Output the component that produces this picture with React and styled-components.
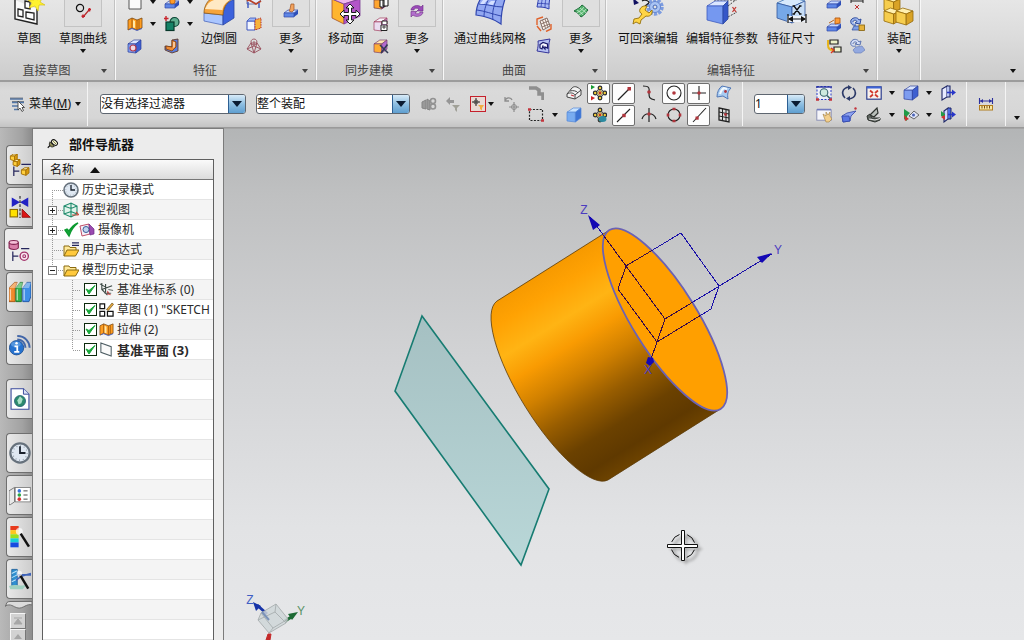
import { useState } from 'react';
import styled, { createGlobalStyle } from 'styled-components';

const GlobalStyle = createGlobalStyle`
  * {
    box-sizing: border-box;
  }

  body {
    margin: 0;
    overflow: hidden;
    font-family: 'Noto Sans', 'Noto Sans CJK SC', sans-serif;
    font-size: 12px;
    line-height: 16px;
    color: #111;
    background: #d6d6d6;
  }

  button, select, input {
    font: inherit;
    color: inherit;
  }
`;

const Page = styled.div`
  display: flex;
  flex-direction: column;
  height: 100vh;
`;

/* ---------- ribbon ---------- */

const Ribbon = styled.header`
  display: flex;
  flex: none;
  overflow: hidden;
  background: linear-gradient(#e6e6e6, #dcdcdc 45%, #cccccc);
  border-bottom: 2px solid #9c9c9c;
`;

const Group = styled.section`
  display: flex;
  flex-direction: column;
  flex: none;
  width: ${({ $width }) => $width}px;
  border-right: 1px solid #f8f8f8;
  box-shadow: inset -1px 0 0 #c2c2c2;
`;

const GroupBody = styled.div`
  display: flex;
  height: 62px;
  padding-left: ${({ $pad }) => $pad || 0}px;
`;

const GroupFooter = styled.div`
  display: flex;
  align-items: center;
  height: 18px;
  color: #444;
`;

const GroupTitle = styled.h2`
  flex: 1;
  margin: 0;
  font-size: 12px;
  font-weight: 400;
  line-height: 16px;
  text-align: center;
`;

const PlainButton = styled.button`
  display: flex;
  align-items: center;
  justify-content: center;
  flex: none;
  padding: 0;
  border: 0;
  background: none;
`;

const GroupMore = styled(PlainButton)`
  width: 22px;
  height: 16px;
`;

const LargeButton = styled(PlainButton)`
  flex-direction: column;
  justify-content: flex-start;
  width: ${({ $width }) => $width}px;
`;

const LargeLabel = styled.span`
  margin-top: 4px;
  line-height: 17px;
  white-space: nowrap;
`;

const GalleryFrame = styled.span`
  display: flex;
  align-items: center;
  justify-content: center;
  width: 38px;
  height: 27px;
  padding-bottom: 5px;
  margin-bottom: -1px;
  border: 1px solid #c3c3c3;
  border-top: 0;
  background: #dfdfdf;
`;

const SmallColumn = styled.div`
  display: grid;
  grid-auto-rows: 22px;
  align-content: end;
  justify-items: center;
  width: ${({ $width }) => $width}px;
  height: 57px;
`;

const RibbonEnd = styled.div`
  display: flex;
  flex: 1;
  align-items: flex-end;
  justify-content: flex-end;
  padding-bottom: 1px;
`;

/* ---------- selection toolbar ---------- */

const Toolbar = styled.div`
  display: flex;
  flex: none;
  height: 46px;
  padding-bottom: 1px;
  background: linear-gradient(#cfcfcf, #dadada 20%, #d6d6d6 80%, #c4c4c4);
  border-bottom: 1px solid #9a9a9a;
`;

const Section = styled.div`
  display: flex;
  align-items: center;
  flex: none;
  padding: 0 ${({ $right }) => $right || 0}px 0 ${({ $left }) => $left || 0}px;
  border-right: 1px solid #f4f4f4;
`;

const ToolbarEnd = styled.div`
  display: flex;
  flex: 1;
  align-items: flex-end;
  justify-content: flex-end;
`;

const MenuButton = styled(PlainButton)`
  gap: 3px;
`;

const SelectBox = styled.label`
  display: grid;
  align-items: center;
  flex: none;
  width: ${({ $width }) => $width}px;
  height: 20px;
  margin-right: ${({ $after }) => $after}px;
`;

const Select = styled.select`
  grid-area: 1 / 1;
  width: 100%;
  height: 20px;
  padding: 0;
  border: 1px solid #5e6670;
  border-radius: 3px;
  background: #fff;
  appearance: none;
  outline: none;
`;

const SelectArrow = styled.span`
  grid-area: 1 / 1;
  justify-self: end;
  display: flex;
  align-items: center;
  justify-content: center;
  width: 17px;
  height: 18px;
  margin-right: 1px;
  border-left: 1px solid #2d5f93;
  border-radius: 0 2px 2px 0;
  background: linear-gradient(#d8ebf8, #8fbfe2 50%, #5f9fd0);
  pointer-events: none;
`;

const ToolCell = styled(PlainButton)`
  width: ${({ $width }) => $width}px;
  height: 22px;
  gap: 1px;
`;

const ToolGrid = styled.div`
  display: grid;
  grid-template-columns: ${({ $columns }) => $columns};
  grid-auto-rows: 22px;
  align-items: center;
  justify-items: center;
`;

const GridButton = styled(PlainButton)`
  width: 23px;
  height: 21px;
  border-radius: 2px;
  ${({ $on }) => $on && 'background: #fdfdfd; border: 1px solid #6e6e6e;'}
`;

/* ---------- resource bar ---------- */

const Workspace = styled.div`
  display: flex;
  flex: 1;
  min-height: 0;
`;

const ResourceBar = styled.nav`
  display: flex;
  flex-direction: column;
  align-items: flex-end;
  flex: none;
  width: 32px;
  padding-top: 17px;
  background: linear-gradient(90deg, #b9b9b9, #a2a2a2 70%, #8c8c8c);
`;

const Tab = styled.button`
  display: flex;
  align-items: center;
  justify-content: center;
  flex: none;
  position: relative;
  width: ${({ $active }) => ($active ? 29 : 26)}px;
  height: ${({ $active }) => ($active ? 43 : 40)}px;
  margin: 0 ${({ $active }) => ($active ? '-1px' : '0')} ${({ $gap }) => $gap}px 0;
  padding: 0;
  border: 1px solid #6f6f6f;
  border-right: 0;
  border-radius: 4px 0 0 4px;
  background: ${({ $active }) => ($active ? '#ececec' : 'linear-gradient(90deg, #e9e9e9, #cdcdcd)')};
`;

const TabEdge = styled.svg`
  flex: none;
  width: 28px;
  height: 12px;
`;

const ScrollButton = styled.button`
  display: flex;
  align-items: center;
  justify-content: center;
  flex: none;
  width: 16px;
  height: 16px;
  margin-right: 6px;
  padding: 0;
  border: 1px solid #f6f6f6;
  border-right-color: #777;
  border-bottom-color: #777;
  background: #d2d2d2;
`;

/* ---------- part navigator ---------- */

const Navigator = styled.aside`
  display: flex;
  flex-direction: column;
  flex: none;
  width: 192px;
  padding: 0 9px;
  border: 1px solid #7b7b7b;
  border-bottom: 0;
  background: #ececec;
`;

const NavigatorTitle = styled.div`
  display: flex;
  align-items: center;
  flex: none;
  gap: 10px;
  height: 30px;
  padding-left: 5px;

  h1 {
    margin: 0;
    font-size: 13px;
    font-weight: 700;
    line-height: 18px;
  }
`;

const TreeBox = styled.div`
  flex: 1;
  min-height: 0;
  overflow: hidden;
  border: 1px solid #5f5f5f;
  border-bottom: 0;
  background: #fff;
`;

const TreeTable = styled.table`
  width: 100%;
  table-layout: fixed;
  border-spacing: 0;

  th {
    height: 20px;
    padding: 0 0 0 7px;
    font-weight: 400;
    text-align: left;
    border-bottom: 1px solid #777;
    background: linear-gradient(#fafafa, #dcdcdc);
  }

  td {
    height: 20px;
    padding: 0;
    border-bottom: 1px solid #e4e4e4;
  }

  tbody tr:nth-child(even) {
    background: #f4f4f4;
  }
`;

const HeaderLabel = styled.span`
  display: flex;
  align-items: center;
  gap: 15px;
`;

const TreeItem = styled.div`
  display: flex;
  align-items: center;
  height: 19px;
  padding-left: 1px;
  overflow: hidden;
  white-space: nowrap;
  color: #2b2b2b;
  font-size: ${({ $bold }) => ($bold ? 13 : 12)}px;
  font-weight: ${({ $bold }) => ($bold ? 700 : 400)};
`;

const Guide = styled.svg`
  flex: none;
  width: ${({ $width }) => $width}px;
  height: 20px;
`;

const Expander = styled.button`
  display: flex;
  flex: none;
  width: 19px;
  height: 20px;
  padding: 0;
  border: 0;
  background: none;
`;

const ItemLabel = styled.label`
  margin-left: 3px;
`;

const CheckWrap = styled.span`
  display: grid;
  flex: none;
  margin: 0 2px;

  svg {
    grid-area: 1 / 1;
    pointer-events: none;
  }
`;

const Check = styled.input`
  grid-area: 1 / 1;
  width: 13px;
  height: 13px;
  margin: 0;
  border: 1px solid #0c2a0c;
  background: #fff;
  appearance: none;
`;

/* ---------- viewport ---------- */

const Viewport = styled.main`
  flex: 1;
  min-width: 0;
  overflow: hidden;
  background: linear-gradient(#b3b5b6, #bfc0c1 13%, #d2d3d5 45%, #e2e3e5 78%, #e6e7e9);
  border-top: 1px solid #a4a4a4;
`;

const Scene = styled.svg`
  display: block;
  width: 100%;
  height: 100%;
`;

const Svg = styled.svg`
  display: block;
  flex: none;
`;

const Icon = ({ name, size = 16 }) => (
  <Svg width={size} height={size} viewBox='0 0 16 16' fill='none'>
    {icons[name]}
  </Svg>
);

const LargeIcon = ({ name }) => (
  <Svg width='32' height='26' viewBox='0 0 32 26' fill='none'>
    {largeIcons[name]}
  </Svg>
);

const Caret = ({ size = 8, color = '#111' }) => (
  <Svg width={size} height={size} viewBox='0 0 8 8'>
    <path d='M1 2H7L4 6Z' fill={color} />
  </Svg>
);

// 작은 정육면체, 여러 아이콘에서 공통으로 사용
const Cube = ({ x = 1, y = 2, s = 13, front = '#7d9cf0', top = '#dbe6ff', side = '#3e5fd0', line = '#2b3f9c' }) => {
  const d = s * 0.3;
  return (
    <g stroke={line} strokeWidth='.7' strokeLinejoin='round'>
      <path d={`M${x} ${y + d}L${x + s * 0.45} ${y}H${x + s}L${x + s * 0.6} ${y + d}Z`} fill={top} />
      <path d={`M${x} ${y + d}H${x + s * 0.6}V${y + s}L${x} ${y + s - 1}Z`} fill={front} />
      <path d={`M${x + s * 0.6} ${y + d}L${x + s} ${y}V${y + s - d}L${x + s * 0.6} ${y + s}Z`} fill={side} />
    </g>
  );
};

const Base = ({ y = 7 }) => (
  <>
    <path d={`M1 ${y + 3}L5 ${y}H15L11 ${y + 3}Z`} fill='#c5d8ff' stroke='#3048a8' strokeWidth='.7' />
    <path d={`M1 ${y + 3}H11V${y + 7}H1Z`} fill='#5e86e6' stroke='#3048a8' strokeWidth='.7' />
    <path d={`M11 ${y + 3}L15 ${y}V${y + 4}L11 ${y + 7}Z`} fill='#2e4fb8' />
  </>
);

const folder = (
  <>
    <path d='M1 14V4H6L7 5.5H13V8' fill='#ffe99a' stroke='#8a6a10' />
    <path d='M1 14L4 8H16L12.5 14Z' fill='#ffc93c' stroke='#8a6a10' />
  </>
);

const clock = (
  <>
    <circle cx='8' cy='8' r='7' fill='#dfe8f2' stroke='#66717c' strokeWidth='1.6' />
    <circle cx='8' cy='8' r='5.2' fill='none' stroke='#7c8894' strokeWidth='.8' strokeDasharray='.6 2.12' />
    <path d='M8 3V8H12' stroke='#18202c' strokeWidth='1.3' />
  </>
);

const snapPoints = (
  <>
    <path d='M9 4.5L5.5 8L9 11.5L12.5 8Z' fill='#f2d75a' />
    <g fill='#f0cf3a' stroke='#2a2a2a' strokeWidth='1.2'>
      <circle cx='9' cy='3' r='1.8' />
      <circle cx='9' cy='13' r='1.8' />
      <circle cx='4.2' cy='8' r='1.8' />
      <circle cx='13.8' cy='8' r='1.8' />
    </g>
    <path d='M6 5L7.5 6.5M12 5L10.5 6.5M6 11L7.5 9.500M12 11L10.5 9.5' stroke='#555' strokeWidth='1.2' />
    <circle cx='9' cy='8' r='1.4' fill='#b33' />
  </>
);

const icons = {
  curves: (
    <>
      <circle cx='5' cy='5' r='3.6' stroke='#111' strokeWidth='1.2' />
      <path d='M8.500 13.500L14 7' stroke='#b52a2a' strokeWidth='1.2' />
      <path d='M8 11.500V15M6.500 13.200H10M13 6.500H16M14.500 5V8.500' stroke='#c4202a' strokeWidth='1.5' />
    </>
  ),
  plane: <path d='M2 1H11L14 4V15H2Z' fill='#fbfbfb' stroke='#555' />,
  extrude: (
    <>
      <path d='M1 4L5 2L10 4L15 2V12L10 14L5 12L1 14Z' fill='#ff9d21' stroke='#7c4a12' strokeWidth='.8' />
      <path d='M5 2V12M10 4V14M12 3.5V13' stroke='#8c4d08' strokeWidth='.8' />
      <path d='M6 4L8 5V12L6 11.5Z' fill='#ffe9a8' />
      <path d='M2 13.5L5 12.5L10 14.5L15 12.5' stroke='#4a61c2' strokeWidth='.9' />
    </>
  ),
  hole: (
    <>
      <Cube />
      <circle cx='6' cy='10' r='3' fill='#f1d9e4' stroke='#b23a4c' strokeWidth='1.2' />
    </>
  ),
  pad: (
    <>
      <Base />
      <path d='M6 3L9 2L11 3V9L8 10L6 9Z' fill='#ff9c2a' stroke='#a2520b' strokeWidth='.7' />
    </>
  ),
  unite: (
    <>
      <circle cx='10.5' cy='6' r='4.5' fill='#5fae90' stroke='#0b4635' strokeWidth='1.2' />
      <rect x='2' y='6' width='8' height='8.5' fill='#138266' stroke='#07372a' strokeWidth='1.2' />
      <path d='M2 0V5M0 2.5H4.5' stroke='#c8242c' strokeWidth='1.4' />
    </>
  ),
  shell: (
    <>
      <path d='M8 2L14 1V13L8 15L1 12V8L8 9Z' fill='#5b7ddb' stroke='#5b3018' strokeWidth='.8' />
      <path d='M8 2L12 4V9L8 13L2 11V8L8 9Z' fill='#ee8b33' stroke='#7a3d14' strokeWidth='.8' />
      <path d='M9 4H11V9L9 10Z' fill='#f7c69a' />
    </>
  ),
  trim: (
    <>
      <path d='M1 4H10L15 1V6L10 10H1Z' fill='#e9edf8' stroke='#4e5f9d' strokeWidth='.8' />
      <path d='M1 7L3 6L10 10L15 7' stroke='#b8432a' strokeWidth='1.8' />
      <path d='M2 8V14M13 9V14' stroke='#3a55c0' strokeWidth='1.4' />
    </>
  ),
  offset: (
    <>
      <path d='M1 5H9V14H1Z' fill='#f2f5ff' stroke='#3a55c0' />
      <path d='M1 5L4 2H10L9 5Z' fill='#9fb8f6' stroke='#3a55c0' strokeWidth='.8' />
      <path d='M9 4L15 2V12L9 14Z' fill='#f6b23c' stroke='#b52f2f' strokeDasharray='1.5 1' />
    </>
  ),
  draft: (
    <path d='M1 11L5 5H11L15 11L8 15ZM5 5L8 15L11 5M1 11L8 8L15 11M8 1A3 3 0 1 1 7.9 1M8 3V8' stroke='#974d5a' strokeWidth='.9' />
  ),
  more: (
    <>
      <Base />
      <path d='M8 1H11V7L9 9L6 8L7 6Z' fill='#f2a35e' stroke='#9d5322' strokeWidth='.7' />
    </>
  ),
  copyFace: (
    <>
      <Cube front='#ffa52e' top='#ffe0a0' side='#a54ec8' line='#6e3c4e' />
      <path d='M7 6H11V13H7ZM10 4H15V12H10Z' fill='#fff' stroke='#111' />
    </>
  ),
  resizeFace: (
    <>
      <Cube front='#eadcf0' top='#f7f1fa' side='#c78ad6' line='#a13a5c' />
      <path d='M8 9H14V14.5H8ZM9 8V5H14V8' fill='#fff' stroke='#222' />
      <path d='M9 11H13M11 9.5V13' stroke='#222' strokeWidth='.8' />
    </>
  ),
  deleteFace: (
    <>
      <Cube front='#ffad35' top='#ffe5b0' side='#b269cf' line='#7c3f6a' />
      <path d='M7 7L15 15M14.5 6.5L8 15' stroke='#333a55' strokeWidth='1.6' />
    </>
  ),
  replace: (
    <>
      <path d='M2 7C2 3 9 1 12 4L14 2V8H8L10 6C8 4.5 5 5 5 7Z' fill='#9b4bb9' stroke='#6d2b86' strokeWidth='.6' />
      <path d='M14 9C14 13 7 15 4 12L2 14V8.5H8L6 10C8 11.5 11 11 11 9Z' fill='#b370cc' stroke='#6d2b86' strokeWidth='.6' />
    </>
  ),
  mesh: (
    <>
      <path d='M3 2C7 1 11 2 15 1C13 6 13 10 13 15C9 13 5 13 1 13C2 9 2 6 3 2Z' fill='#a9baf5' stroke='#2e3fae' />
      <path d='M7 1.5C6 6 5.5 9 5 13M11 1.5C9.5 6 9 9 9 14M2.5 5.5C7 5 10 6 14 5M2 9.5C6 9 9 10 13 10' stroke='#2e3fae' strokeWidth='.8' />
    </>
  ),
  sweep: (
    <>
      <path d='M4 5L11 2L14 10L7 14Z' fill='#f8efe9' stroke='#6d5148' strokeWidth='.8' />
      <path d='M6.5 4L9.5 12M9 3L12 11M5 8L12.5 5M6 11L13.5 8' stroke='#6d5148' strokeWidth='.7' />
      <path d='M1 9V3L7 1M1 10L5 15M15 8V13L10 15.5' stroke='#e0622b' strokeWidth='1.4' />
    </>
  ),
  nSided: (
    <>
      <path d='M2 3L14 1C12.5 6 12.5 10 13 15L1 13C2 10 2.5 6 2 3Z' fill='#b7c1f2' stroke='#34349a' />
      <path d='M4 10V6.5L7 4.500L11.5 6V10L9 9V11L7 9V7.500L6 11Z' fill='#f7f7ff' stroke='#1b1b6a' strokeWidth='1.2' />
    </>
  ),
  green: (
    <>
      <path d='M1 8C4 6 7 5 9 2C11 3 13 6 15 7C13 9 12 12 8 14C6 11 4 9 1 8Z' fill='#52b26c' stroke='#1b6a38' />
      <path d='M4 7C7 9 9 10 10 12M7 5C9 7 12 8 13 10M3.5 10C7 8 9 7 11 4M6 12C9 10 11 9 13 6' stroke='#d8f4dc' strokeWidth='.7' />
    </>
  ),
  rollback: (
    <>
      <Base y={7} />
      <path d='M3 6C5 1 11 1 12 6' stroke='#c03030' strokeWidth='1.6' />
    </>
  ),
  replaceFeature: (
    <>
      <Base y={8} />
      <path d='M9 2H14V7L9 8ZM3 7L8 4' fill='#ff9d35' stroke='#b35a12' strokeWidth='.9' />
    </>
  ),
  reorder: (
    <>
      <path d='M4 2H12V6H4ZM8 9H15V14H8Z' fill='#eef3c9' stroke='#222' strokeWidth='1.2' />
      <path d='M2 2V7C2 11 4 12 7 12' stroke='#e8b51c' strokeWidth='2' />
      <path d='M5 10L8 12L5 15' stroke='#d8371e' strokeWidth='1.4' />
    </>
  ),
  dims: (
    <>
      <path d='M2 1V9M14 1V9M2 7H14' stroke='#222' />
      <path d='M6 11L10 15M10 11L6 15' stroke='#c03030' />
    </>
  ),
  suppress: (
    <>
      <path d='M7 9C3 10 1 7 2 4C4 1 9 1 10 4L12 3L11 8L6 7L8 5.5C7 3.5 4 4 4 6' fill='#9db6ee' stroke='#2c4a9d' />
      <path d='M5 10H11V14H3Z' fill='#7f9fe6' stroke='#2c4a9d' strokeWidth='.7' />
      <rect x='10' y='9' width='5.5' height='5.5' fill='#e5b23a' stroke='#84600b' strokeWidth='.8' />
    </>
  ),
  unsuppress: (
    <>
      <path d='M7 8C3 9 1 7 2 4C4 0 9 1 10 4L12 3L11 7L6 6L8 5C7 3 4 4 4 6' fill='#d4def7' stroke='#5a73b0' />
      <path d='M4 12L7 9L13 8L16 12L12 15H6Z' fill='#93a9e0' stroke='#6d83bb' strokeWidth='.7' />
    </>
  ),
  menu: (
    <>
      <path d='M0 3H13M2 6.5H14M2 10H8M4 13.5H9' stroke='#5377a8' strokeWidth='1.5' />
      <path d='M0 2H13M2 5.5H14' stroke='#3f4b5c' strokeWidth='.6' />
      <path d='M8 5V14L10 12L12 15.5L13.5 14.5L12 11.5H14.5Z' fill='#fff' stroke='#444' strokeWidth='.9' />
    </>
  ),
  grayPart: (
    <>
      <path d='M1 6L5 4V13L1 12ZM6 3L9 5V14L6 13Z' fill='#999' stroke='#858585' />
      <circle cx='12' cy='5' r='2.5' stroke='#929292' strokeWidth='1.6' />
      <circle cx='12' cy='10.5' r='2.5' stroke='#929292' strokeWidth='1.6' />
    </>
  ),
  grayFilter: (
    <>
      <path d='M1 5L5 1V4H9V7H5V9Z' fill='#969696' />
      <path d='M7 9H15L12 12V16L10 14V12Z' fill='#a0a097' />
    </>
  ),
  snapBox: (
    <>
      <rect x='.5' y='.5' width='15' height='15' fill='#e8d9d4' stroke='#c5202c' />
      <path d='M6 2V10M2 6H10' stroke='#222' />
      <circle cx='6' cy='6' r='2' stroke='#444' strokeWidth='.8' />
      <path d='M8 9H14L12 12V14.5L10 13V11Z' fill='#f2ab3f' />
    </>
  ),
  grayRotate: (
    <>
      <path d='M2 5C3 1 8 1 9 4M2 1V5H6' stroke='#8d8d8d' strokeWidth='1.3' />
      <path d='M11 6V16M6 11H16' stroke='#8d8d8d' strokeWidth='1.2' />
      <circle cx='11' cy='11' r='2.5' stroke='#8d8d8d' />
    </>
  ),
  grayLine: <path d='M1 3H8L11 5V9H15V15' stroke='#8f8f8f' strokeWidth='3.5' />,
  lasso: (
    <>
      <rect x='1.5' y='2.5' width='13' height='11' stroke='#222' strokeWidth='1.2' strokeDasharray='2 1.4' />
      <path d='M0 2.5H3M13 13.5H16' stroke='#c3343c' strokeWidth='2.4' />
    </>
  ),
  wireBlock: (
    <>
      <path d='M1 9L6 3C8 1 11 1 15 5V10L9 14L1 12Z' fill='#f2f2f2' stroke='#444' />
      <path d='M1 9C4 7 8 8 9 10L15 5M9 10V14M4 6C7 5 11 6 12 8' stroke='#444' />
      <path d='M5 10L8 11' stroke='#c3343c' strokeWidth='1.2' />
    </>
  ),
  snapAll: (
    <>
      {snapPoints}
      <path d='M0 0L4 2L0 4.5Z' fill='#159b32' />
      <path d='M0 11L4 13L0 15.5Z' fill='#d02323' />
    </>
  ),
  endPoint: (
    <>
      <path d='M2 15L13 4' stroke='#222' strokeWidth='1.2' />
      <rect x='11.5' y='2' width='3.5' height='3.5' fill='#b0353c' />
    </>
  ),
  sCurve: (
    <>
      <path d='M2 1C10 1 8 5 8 8C8 12 8 14 14 15' stroke='#222' strokeWidth='1.2' />
      <circle cx='8' cy='7' r='1.8' fill='#b0353c' />
    </>
  ),
  center: (
    <>
      <circle cx='8' cy='8' r='7' stroke='#222' strokeWidth='1.1' />
      <circle cx='8' cy='8' r='1.8' fill='#b0353c' />
    </>
  ),
  cross: (
    <>
      <path d='M8 1V15M1 8H15' stroke='#222' strokeWidth='1.1' />
      <circle cx='8' cy='8' r='1.7' fill='#b0353c' />
    </>
  ),
  surface: (
    <>
      <path d='M1 12C1 7 3 3 6 1L15 3C12 6 11 9 12 14L7 11Z' fill='#a9ccf2' stroke='#5177b5' />
      <path d='M4 9C5 6 6 4 8 3L11 4' stroke='#f3faff' strokeWidth='2' />
      <circle cx='9.5' cy='6.5' r='1.4' fill='#b0353c' />
    </>
  ),
  solid: <Cube x={1} y={1} s={14} front='#79acf0' top='#c9e4ff' side='#3d74d4' line='#5488d8' />,
  snapGlobe: (
    <>
      {snapPoints}
      <ellipse cx='11.5' cy='12' rx='4' ry='3' fill='#2c8aa0' />
    </>
  ),
  midPoint: (
    <>
      <path d='M1 15L14 2' stroke='#222' strokeWidth='1.1' />
      <rect x='6.3' y='6.8' width='3.4' height='3.4' fill='#b0353c' />
    </>
  ),
  intersect: (
    <>
      <path d='M1 12C3 5 13 5 15 12M8 1V15' stroke='#222' strokeWidth='1.2' />
      <circle cx='8' cy='7' r='1.7' fill='#b0353c' />
    </>
  ),
  quadrant: (
    <>
      <circle cx='8' cy='8' r='6' stroke='#222' strokeWidth='1.1' />
      <path d='M6.5 2H9.5M6.5 14H9.5M2 6.5V9.5M14 6.5V9.5' stroke='#b0353c' strokeWidth='2.6' />
    </>
  ),
  onCurve: (
    <>
      <path d='M2 15L15 1' stroke='#222' strokeWidth='1.1' />
      <rect x='4.5' y='9.5' width='3.2' height='3.2' fill='#b0353c' />
    </>
  ),
  grid: (
    <>
      <path d='M3 1L13 3V15L3 13Z' fill='#ddd' stroke='#222' strokeWidth='1.3' />
      <path d='M6.5 2V14M10 2.5V14.5M3 5L13 7M3 9L13 11' stroke='#222' />
      <circle cx='9.5' cy='7.5' r='1.4' fill='#b0353c' />
    </>
  ),
  fit: (
    <>
      <rect x='1' y='1.5' width='14' height='13' fill='#eef0f8' stroke='#2d3dc8' strokeDasharray='2 1.5' />
      <path d='M0 2H16' stroke='#26309c' strokeWidth='1.4' />
      <path d='M0 14.5H3M13 14.5H16' stroke='#c3343c' strokeWidth='2.4' />
      <circle cx='8' cy='7.5' r='3.8' fill='#cfeadf' stroke='#39656b' strokeWidth='1.1' />
      <path d='M11 10.5L14 13.5' stroke='#39656b' strokeWidth='1.6' />
    </>
  ),
  rotate: (
    <>
      <path d='M4 13C0 9 1 3 8 2M12 3C16 7 15 13 8 14' stroke='#2c3a68' strokeWidth='1.7' />
      <path d='M7 0L11 2.5L7 5ZM9 16L5 13.5L9 11Z' fill='#2c3a68' />
    </>
  ),
  layout: (
    <>
      <rect x='.8' y='1.8' width='14.4' height='12.4' fill='#f8f2ee' stroke='#2d3f8f' strokeWidth='1.2' />
      <path d='M1 2.5H15' stroke='#3d63d6' strokeWidth='2' />
      <path d='M4 5.5L7 8M4 12L7 9.5M12 5.5L9 8M12 12L9 9.5' stroke='#d0382c' strokeWidth='1.8' />
    </>
  ),
  shaded: <Cube x={1} y={1} s={14} />,
  open: (
    <>
      <path d='M2 4L7 1V12L2 15Z' fill='#e9ecff' stroke='#1e2766' strokeWidth='1.1' />
      <path d='M7 1H10V12H7' fill='#b8c4f0' stroke='#1e2766' strokeWidth='1.1' />
      <path d='M7 7.5H13' stroke='#2836c8' strokeWidth='1.6' />
      <path d='M12 4.5L16 7.5L12 10.5Z' fill='#2836c8' />
    </>
  ),
  snapshot: (
    <>
      <rect x='.8' y='2.8' width='14.4' height='10.4' fill='#f5f5fa' stroke='#8b91b5' />
      <path d='M1 2.5H15' stroke='#6f7ac0' strokeWidth='1.5' />
      <path d='M8 10L7 7L10 9L10 5L12 8L14 5V9L16 12L13 15H10Z' fill='#f3cf8c' stroke='#9d7b3c' strokeWidth='.6' />
    </>
  ),
  paint: (
    <>
      <path d='M1 9L6 6L15 4L10 9L9 14L2 15Z' fill='#8ea3f0' stroke='#3146a8' strokeWidth='.8' />
      <path d='M1 9H8L9 14L2 15Z' fill='#5a76e2' stroke='#3146a8' strokeWidth='.8' />
      <circle cx='14.5' cy='1.5' r='1.2' fill='#c3343c' />
    </>
  ),
  section: (
    <>
      <path d='M4 8L11 1L12 6L8 10Z' fill='#b9bfba' stroke='#2d322e' strokeWidth='1.2' />
      <path d='M1 9L4 7L6 11H14V13L9 15L2 13Z' fill='#5e645f' stroke='#2d322e' />
      <path d='M3 12L9 13L14 11.5' stroke='#e6e6e6' />
    </>
  ),
  clip: (
    <>
      <path d='M1 2L7 6L4 9V14L1 12Z' fill='#219b47' />
      <path d='M1 8L6 12L2 14Z' fill='#d03131' />
      <path d='M6 9L11 4L16 8L11 12Z' fill='#dfe4f6' stroke='#666' />
      <circle cx='10.5' cy='8' r='1.5' fill='#4d65b8' />
    </>
  ),
  openCut: (
    <>
      <path d='M4 4L8 1V12L4 15Z' fill='#cfd5ff' stroke='#1e2766' strokeWidth='1.1' />
      <path d='M8 1H11V12H8' fill='#4d6be0' stroke='#1e2766' />
      <path d='M1 4L5 7V11L1 9Z' fill='#219b47' />
      <path d='M1 10L5 8V13Z' fill='#d03131' />
      <path d='M8 7.5H13' stroke='#2836c8' strokeWidth='1.6' />
      <path d='M12 4.5L16 7.5L12 10.5Z' fill='#2836c8' />
    </>
  ),
  measure: (
    <>
      <path d='M1.5 2V8M14.5 2V8M2 5H14' stroke='#2b2f9e' strokeWidth='1.1' />
      <path d='M2 5L5 3V7ZM14 5L11 3V7Z' fill='#2b2f9e' />
      <rect x='1.5' y='9.5' width='13' height='4.5' fill='#f8e9a2' stroke='#b07c1e' />
      <path d='M4 10V12.5M6.5 10V12.5M9 10V12.5M11.5 10V12.5' stroke='#7a4c12' />
    </>
  ),
  assemblyTab: (
    <>
      <Cube x={1} y={0} s={5} front='#ffcf3d' top='#ffefb0' side='#d99a0c' line='#a87407' />
      <Cube x={3} y={4} s={5} front='#ffcf3d' top='#ffefb0' side='#d99a0c' line='#a87407' />
      <Cube x={9} y={10} s={5.5} front='#ffcf3d' top='#ffefb0' side='#d99a0c' line='#a87407' />
      <path d='M3.5 9V16M3.5 12.5H7.5M9 7.5H16' stroke='#26265c' strokeWidth='.9' />
    </>
  ),
  constraintTab: (
    <>
      <path d='M2 1V8L8 4.5ZM14 1V8L8 4.5Z' fill='#2222c4' />
      <path d='M8 0V16' stroke='#222' strokeWidth='.8' strokeDasharray='2 1' />
      <rect x='.8' y='9.8' width='5.4' height='5.4' fill='#ffe100' stroke='#8a6a00' strokeWidth='.8' />
      <path d='M9.5 9.5V15.5H15.5Z' fill='#dc1414' stroke='#8a1010' strokeWidth='.6' />
    </>
  ),
  partTab: (
    <>
      <path d='M.8 2.5V6.5C2 8 6.5 8 7.5 6.5V2.5' fill='#d97fa8' stroke='#81234f' strokeWidth='.8' />
      <ellipse cx='4.15' cy='2.5' rx='3.35' ry='1.4' fill='#f5c1d8' stroke='#81234f' strokeWidth='.8' />
      <path d='M9.5 7H15.5M3.5 9V16M3.5 12.5H7.5' stroke='#26265c' strokeWidth='.9' />
      <circle cx='11.8' cy='12.5' r='3' fill='#f8e6ef' stroke='#a3336b' />
      <circle cx='11.8' cy='12.5' r='1' stroke='#a3336b' strokeWidth='.8' />
    </>
  ),
  libraryTab: (
    <>
      <path d='M0 5L4 1H6L4.5 5V15H0Z' fill='#f08a2c' stroke='#a04f10' strokeWidth='.6' />
      <path d='M5 5L8 1H10L9 5V15H5Z' fill='#34b24a' stroke='#146b26' strokeWidth='.6' />
      <path d='M10 5L13 1H16V11L14.5 15H10Z' fill='#3f8fe6' stroke='#1a4fa0' strokeWidth='.6' />
      <path d='M0 5L4 1H16L14.5 5Z' fill='#fff' fillOpacity='.35' />
      <path d='M1 6V14M6 6V14M11 6V14' stroke='#fff' strokeOpacity='.6' />
    </>
  ),
  infoTab: (
    <>
      <path d='M6 4C10 4 12 7 12 10M6 1.5C12 1.5 15 6 15 10' stroke='#4266a8' strokeWidth='1.4' />
      <circle cx='5.5' cy='10' r='5.2' fill='#2672cf' stroke='#164a92' strokeWidth='.6' />
      <ellipse cx='5' cy='7.5' rx='3.5' ry='2' fill='#7db8f0' fillOpacity='.5' />
      <path d='M4 9H6V13M3.8 13H7.5' stroke='#fff' strokeWidth='1.3' />
      <circle cx='5.5' cy='6.8' r='.9' fill='#fff' />
    </>
  ),
  webTab: (
    <>
      <path d='M1.5 .5H10.5L14.5 4.5V15.5H1.5Z' fill='#fff' stroke='#3a4a9c' strokeWidth='.8' />
      <path d='M10.5 .5V4.5H14.5' fill='#dce2f6' stroke='#3a4a9c' strokeWidth='.7' />
      <circle cx='8' cy='9.5' r='4' fill='#2d8a6c' stroke='#1f5d73' strokeWidth='.6' />
      <path d='M8 6L10 8L9 11L7 12L6 9Z' fill='#a9dfc6' />
    </>
  ),
  clock,
  palettesTab: (
    <>
      <path d='M0 5L4 2.5V13L1 15H0Z' fill='#e9e9e9' stroke='#666' strokeWidth='.6' />
      <rect x='4.5' y='2.5' width='11' height='10.5' fill='#fff' stroke='#777' strokeWidth='.6' />
      <circle cx='7.5' cy='5' r='1.3' fill='#3a74d8' />
      <circle cx='7.5' cy='8' r='1.3' fill='#2ba545' />
      <circle cx='7.5' cy='11' r='1.3' fill='#d83030' />
      <path d='M10.5 5H13.5M10.5 8H13.5M10.5 11H13.5' stroke='#444' strokeWidth='.7' />
    </>
  ),
  colorTab: (
    <>
      <path d='M1 0H7V3H1Z' fill='#e83a1c' />
      <path d='M1 3H7V6H1Z' fill='#ffc61c' />
      <path d='M1 6H7V9H1Z' fill='#9be01c' />
      <path d='M1 9H7V12H1Z' fill='#17cfd8' />
      <path d='M1 12H7V15.5H1Z' fill='#174be0' />
      <circle cx='7.5' cy='4' r='2.5' fill='#fff' fillOpacity='.7' />
      <path d='M8.5 5.5L14.5 15' stroke='#111' strokeWidth='1.8' />
    </>
  ),
  studioTab: (
    <>
      <path d='M2 1H6V13H2Z' fill='#2f8fd0' stroke='#1d5f98' strokeWidth='.6' />
      <path d='M2 4L6 2M2 7L6 5M2 10L6 8' stroke='#bde3f8' strokeWidth='.8' />
      <path d='M0 13C5 11 9 14 13 12L10 15.5H1Z' fill='#9fd0c0' />
      <path d='M5 9L9 6L16 4M6 5H16' stroke='#3f63b8' strokeWidth='1.1' />
      <path d='M8 5L14 15' stroke='#111' strokeWidth='1.8' />
      <circle cx='7.5' cy='4' r='2' fill='#fff' fillOpacity='.7' />
    </>
  ),
  modelView: (
    <>
      <path d='M1 4L8 1L14 4V12L8 15L1 12ZM1 4L8 6.5L14 4M8 1V15M1 12L8 9.5L14 12' fill='#dff3ea' stroke='#1f8a6c' strokeWidth='1.1' />
      <path d='M9 13H15M13 10L16 13' stroke='#d04a3c' strokeWidth='1.2' />
    </>
  ),
  tick: <path d='M2 8L6 14C8 8 11 4 15 1C10 3 8 6 6 9L4 7Z' fill='#16a53a' stroke='#0c9a30' strokeWidth='1.4' />,
  camera: (
    <>
      <path d='M1 4L10 2L11 12L3 14Z' fill='#f5eef6' stroke='#c0506a' />
      <path d='M10 2L15 7V12L11 13Z' fill='#9a4ab0' stroke='#6d2b86' strokeWidth='.7' />
      <circle cx='7' cy='7.5' r='3' fill='#bfd3ee' stroke='#3b5d98' />
    </>
  ),
  expressions: (
    <>
      {folder}
      <path d='M9 .8H16M9 3.3H16' stroke='#26265c' strokeWidth='1.2' />
    </>
  ),
  folder,
  csys: (
    <>
      <path d='M3 1V8L9 14M3 8L14 4M1 2L8 6M7 2V11' stroke='#3e4a46' strokeWidth='1.2' />
      <path d='M9 9L13 14L8 13Z' fill='#d85050' />
      <path d='M6 12H13M10 8L15 9' stroke='#55605c' />
    </>
  ),
  sketch: (
    <>
      <path d='M1 2H6V7H1ZM1 10H6V15H1ZM9 10H15V15H9Z' fill='#fff' stroke='#111' strokeWidth='1.3' />
      <path d='M8 8L14 1L15.5 2.5L10 9Z' fill='#e8a93c' stroke='#5c4310' strokeWidth='.7' />
    </>
  ),
  datumPlane: <path d='M2 1L13 5V15L2 11Z' fill='#fafafa' stroke='#4c5c62' strokeWidth='1.1' />,
  pin: (
    <>
      <path d='M1 13L5 9' stroke='#111' strokeWidth='1.5' />
      <path d='M4 5L10 11L7 12C5 12 3 10 3 8Z' fill='#8f8c54' stroke='#111' />
      <ellipse cx='10' cy='6' rx='4.5' ry='3' transform='rotate(40 10 6)' fill='#f4f3d4' stroke='#111' strokeWidth='1.3' />
      <path d='M8 4L12 8' stroke='#807c3a' strokeWidth='1.2' />
    </>
  ),
};

const Box3D = ({ x, y, w, h }) => (
  <g stroke='#94690a' strokeWidth='.8' strokeLinejoin='round'>
    <path d={`M${x} ${y}L${x + w * 0.4} ${y - 3}L${x + w} ${y}L${x + w * 0.6} ${y + 3}Z`} fill='#fff0b0' />
    <path d={`M${x} ${y}L${x + w * 0.6} ${y + 3}V${y + h}L${x} ${y + h - 3}Z`} fill='#f6cd4e' />
    <path d={`M${x + w * 0.6} ${y + 3}L${x + w} ${y}V${y + h - 4}L${x + w * 0.6} ${y + h}Z`} fill='#d9a326' />
  </g>
);

const largeIcons = {
  sketch: (
    <>
      <path d='M2 0V19L24 24V9' fill='#fafafa' stroke='#222' strokeWidth='1.4' />
      <path d='M5 9L10 10V17L5 16ZM12 1L17 2V9L12 8ZM13 12L21 13V20L13 18Z' fill='#fff' stroke='#222' strokeWidth='1.3' />
      <path d='M23 -6L24.5 0L30 -3L27 2L32 5L26 5L25 11L22 6L16 8L19 3L15 0L21 0Z' fill='#fff22e' stroke='#d8c21a' strokeWidth='.7' />
    </>
  ),
  blend: (
    <>
      <path d='M1 13L20 15V25L1 21Z' fill='#aac6ff' stroke='#4c68bd' strokeWidth='.8' />
      <path d='M20 15C21 6 25 1 31 0V18L20 25Z' fill='#3c62dc' stroke='#2b469f' strokeWidth='.8' />
      <path d='M1 13C1 6 5 0 9 -2H31C25 1 20 6 20 15Z' fill='#f6a43c' stroke='#8b5a18' strokeWidth='.8' />
      <path d='M2 9C4 4 7 1 11 0H27C22 3 20 6 19.5 10Z' fill='#ffe9c4' />
    </>
  ),
  moveFace: (
    <>
      <path d='M2 -1L14 4V24L2 18Z' fill='#ffb52f' stroke='#a3502c' strokeWidth='.8' />
      <path d='M2 -1L14 4L30 -1Z' fill='#f0b8ee' stroke='#7b3d94' strokeWidth='.8' />
      <path d='M14 4L30 -1V16L14 24Z' fill='#b355c8' stroke='#7b3d94' strokeWidth='.8' />
      <path d='M20 4L24 8H21.5V12.5H26V10L30 14L26 18V15.5H21.5V20H24L20 24L16 20H18.5V15.5H14V18L10 14L14 10V12.5H18.5V8H16Z' fill='#fff' stroke='#1c1c1c' />
    </>
  ),
  throughMesh: (
    <>
      <path d='M7 -2L31 -1C28 8 27 16 27 24C20 19 10 16 2 15C2 9 4 3 7 -2Z' fill='#92a8f2' stroke='#3046ae' strokeWidth='1.2' />
      <path d='M15 -2C11 6 10 12 10 17M23 -2C19 7 18 14 19 20M5 4C14 4 20 7 29 7M3 10C11 11 18 14 27 16' stroke='#3046ae' />
      <path d='M9 0L14 0C11 2 11 3 10.5 4L6 4ZM17 1L21 1C20 3 19 5 18.5 5L14 4Z' fill='#d5e0ff' />
    </>
  ),
  rollbackEdit: (
    <>
      <circle cx='23' cy='7' r='7' stroke='#7c9ce0' strokeWidth='3.5' strokeDasharray='3.2 1.2' />
      <circle cx='23' cy='7' r='5.5' fill='#a9c4f4' stroke='#6485cf' />
      <circle cx='23' cy='7' r='2' fill='#e2e2e2' stroke='#4468b8' />
      <path d='M1 -2L7 3L2 5Z' fill='#101060' />
      <path d='M10 1C13 -1 17 1 17 3M17 3L13 6' stroke='#222' strokeWidth='1.3' />
      <path d='M8 9C10 5 15 6 15 6L13 10L17 13L20 10C21 15 17 17 14 16L9 20L8 24L4 22L1 24L2 19L7 18L10 14C8 13 7 11 8 9Z' fill='#ffd545' stroke='#95700b' strokeWidth='.9' />
    </>
  ),
  editParams: (
    <>
      <path d='M8 0H31M22 17L31 12M22 6L31 -1' stroke='#444' strokeDasharray='2 1.2' />
      <path d='M1 6L9 1H22L17 6Z' fill='#dbe6ff' stroke='#3e5cc0' strokeWidth='.8' />
      <path d='M1 6H17V24L1 20Z' fill='#7598f0' stroke='#3e5cc0' strokeWidth='.8' />
      <path d='M17 6L22 1V19L17 24Z' fill='#3657c8' stroke='#2b469f' strokeWidth='.8' />
      <path d='M26.5 7L30 12M30 7L26.5 12' stroke='#c33a34' strokeWidth='1.3' />
    </>
  ),
  featureDims: (
    <>
      <path d='M2 3L15 -3L30 1L17 7Z' fill='#d6e9fc' stroke='#3e76b8' strokeWidth='.8' />
      <path d='M2 3L17 7V23L2 18Z' fill='#76a8e8' stroke='#34569c' strokeWidth='.8' />
      <path d='M17 7L30 1V16L17 23Z' fill='#c7ddf5' stroke='#34569c' strokeWidth='.8' />
      <path d='M19 6L25 14M25 6L19 14M17.5 6H20M24 6H26.5M17.5 14H20M24 14H26.5' stroke='#111' strokeWidth='1.3' />
      <path d='M12 16H32V22H12Z' fill='#eef2f8' />
      <path d='M13 14V23M31 14V23M14 19H30' stroke='#111' strokeWidth='1.2' />
      <path d='M13 19L18 16V22ZM31 19L26 16V22Z' fill='#111' />
    </>
  ),
  assembly: (
    <>
      <Box3D x={1} y={-1} w={16} h={14} />
      <Box3D x={1} y={11} w={16} h={13} />
      <Box3D x={13} y={11} w={17} h={14} />
    </>
  ),
};

const Large = ({ icon, gallery, label, width, caret }) => (
  <LargeButton type='button' $width={width}>
    {gallery ? (
      <GalleryFrame>
        <Icon name={gallery} />
      </GalleryFrame>
    ) : (
      <LargeIcon name={icon} />
    )}
    <LargeLabel>{label}</LargeLabel>
    {caret && <Caret />}
  </LargeButton>
);

const Small = ({ items, width }) => (
  <SmallColumn $width={width}>
    {items.map((name) => (
      <PlainButton key={name} type='button' aria-label={name}>
        <Icon name={name} />
      </PlainButton>
    ))}
  </SmallColumn>
);

const SmallCarets = ({ width }) => (
  <SmallColumn $width={width}>
    <PlainButton type='button' aria-label='展开'><Caret /></PlainButton>
    <PlainButton type='button' aria-label='展开'><Caret /></PlainButton>
    <span />
  </SmallColumn>
);

const RibbonGroup = ({ title, width, pad, children }) => (
  <Group $width={width}>
    <GroupBody $pad={pad}>{children}</GroupBody>
    {title && (
      <GroupFooter>
        <GroupTitle>{title}</GroupTitle>
        <GroupMore type='button' aria-label={`${title}选项`}>
          <Caret color='#444' />
        </GroupMore>
      </GroupFooter>
    )}
  </Group>
);

const Dropdown = ({ label, width, after, options }) => (
  <SelectBox $width={width} $after={after}>
    <Select aria-label={label}>
      {options.map((option) => (
        <option key={option}>{option}</option>
      ))}
    </Select>
    <SelectArrow>
      <Svg width='12' height='8' viewBox='0 0 12 8'>
        <path d='M1 1H11L6 7Z' fill='#0b1c33' />
      </Svg>
    </SelectArrow>
  </SelectBox>
);

const snapTools = [
  ['wireBlock'], ['snapAll', true], ['endPoint', true], ['sCurve'], ['center', true], ['cross', true], ['surface'],
  ['solid'], ['snapGlobe'], ['midPoint', true], ['intersect'], ['quadrant'], ['onCurve', true], ['grid'],
];

const viewTools = [
  'fit', 'rotate', 'layout', 'caret', 'shaded', 'caret', 'open',
  'snapshot', 'paint', 'section', 'caret', 'clip', 'caret', 'openCut',
];

const tabs = [
  { icon: 'assemblyTab', label: '装配导航器', gap: 2 },
  { icon: 'constraintTab', label: '约束导航器', gap: 1 },
  { icon: 'partTab', label: '部件导航器', gap: 1, active: true },
  { icon: 'libraryTab', label: '重用库', gap: 13 },
  { icon: 'infoTab', label: '信息', gap: 14 },
  { icon: 'webTab', label: '浏览器', gap: 14 },
  { icon: 'clock', label: '历史记录', gap: 2 },
  { icon: 'palettesTab', label: '角色', gap: 2 },
  { icon: 'colorTab', label: '材料', gap: 2 },
  { icon: 'studioTab', label: '场景', gap: 2 },
];

const rootItems = [
  { label: '历史记录模式', icon: 'clock' },
  { label: '模型视图', icon: 'modelView', expand: '+' },
  { label: '摄像机', icon: 'camera', expand: '+', tick: true },
  { label: '用户表达式', icon: 'expressions' },
  { label: '模型历史记录', icon: 'folder', expand: '-' },
];

const featureItems = [
  { id: 'csys', label: '基准坐标系 (0)', icon: 'csys' },
  { id: 'sketch', label: '草图 (1) "SKETCH', icon: 'sketch' },
  { id: 'extrude', label: '拉伸 (2)', icon: 'extrude' },
  { id: 'plane', label: '基准平面 (3)', icon: 'datumPlane', bold: true },
];

const RootRow = ({ item, first, last }) => (
  <TreeItem>
    <Expander type='button' aria-label={item.label}>
      <Guide $width={19} viewBox='0 0 19 20' fill='none'>
        <path d={`M8.5 ${first ? 10 : 0}V${last ? 10 : 20}M8 10.5H19`} stroke='#9a9a9a' strokeDasharray='1 1' />
        {item.expand && (
          <>
            <rect x='4.5' y='6.5' width='8' height='8' fill='#fff' stroke='#7d7d7d' />
            <path d={item.expand === '+' ? 'M6 10.5H11M8.5 8V13' : 'M6 10.5H11'} stroke='#222' />
          </>
        )}
      </Guide>
    </Expander>
    {item.tick && <Icon name='tick' />}
    <Icon name={item.icon} />
    <ItemLabel as='span'>{item.label}</ItemLabel>
  </TreeItem>
);

const FeatureRow = ({ item, last }) => {
  const [checked, setChecked] = useState(true);

  return (
    <TreeItem $bold={item.bold}>
      <Guide $width={38} viewBox='0 0 38 20' fill='none'>
        <path d={`M28.5 0V${last ? 10 : 20}M29 10.5H37`} stroke='#9a9a9a' strokeDasharray='1 1' />
      </Guide>
      <CheckWrap>
        <Check type='checkbox' id={item.id} checked={checked} onChange={() => setChecked(!checked)} />
        {checked && (
          <Svg width='13' height='13' viewBox='0 0 13 13'>
            <path d='M2 6L5 11L11 2.5L5 7.5Z' fill='#17a83a' stroke='#17a83a' />
          </Svg>
        )}
      </CheckWrap>
      <Icon name={item.icon} size={15} />
      <ItemLabel htmlFor={item.id}>{item.label}</ItemLabel>
    </TreeItem>
  );
};

const csysLines =
  'M590 217L665 319L772 254M665 319L650 362M626 266L681 233L719 286L711 309L657 342L618 289L626 266M657 342L665 319';

const Model = () => (
  <Scene viewBox='224 129 800 511' preserveAspectRatio='xMinYMin slice' fill='none'>
    <defs>
      <linearGradient id='body' gradientUnits='userSpaceOnUse' x1='497' y1='301' x2='608' y2='480'>
        <stop offset='0' stopColor='#f79a00' />
        <stop offset='.1' stopColor='#ffa203' />
        <stop offset='.24' stopColor='#ffb414' />
        <stop offset='.36' stopColor='#f99b02' />
        <stop offset='.5' stopColor='#d08000' />
        <stop offset='.65' stopColor='#985d00' />
        <stop offset='.8' stopColor='#6b4100' />
        <stop offset='.92' stopColor='#5f3900' />
        <stop offset='1' stopColor='#6d4300' />
      </linearGradient>
      <linearGradient id='datum' x1='0' y1='0' x2='0' y2='1'>
        <stop offset='0' stopColor='#a5c0c2' />
        <stop offset='1' stopColor='#b9d7d8' />
      </linearGradient>
      <clipPath id='onPart'>
        <ellipse cx='665' cy='319.5' rx='105.3' ry='32.3' transform='rotate(58.1 665 319.5)' />
      </clipPath>
      <filter id='shadow' x='-50%' y='-50%' width='200%' height='200%'>
        <feGaussianBlur stdDeviation='1.5' />
      </filter>
    </defs>

    <path d='M422 316L549 489L521 565L395 391Z' fill='url(#datum)' stroke='#177c72' strokeWidth='1.6' />

    <path
      d='M609.4 230.1L496.9 301.1A105.3 32.3 58.1 0 0 608.1 479.9L720.6 408.9Z'
      fill='url(#body)'
      stroke='#5b3a08'
      strokeWidth='.8'
    />
    <ellipse
      cx='665' cy='319.5' rx='105.3' ry='32.3'
      transform='rotate(58.1 665 319.5)'
      fill='#ff9f00' stroke='#6b62b4' strokeWidth='1.8'
    />

    <g shapeRendering='crispEdges'>
      <path d={csysLines} stroke='#1a10a8' />
      <path d={csysLines} stroke='#3a0a48' clipPath='url(#onPart)' />
    </g>
    <path d='M588 215L593 230L600 225ZM772 253L757 257L762 263Z' fill='#1408b4' />
    <path d='M648 357L653 358L654 362L650 366L646 363Z' fill='#1408b4' />
    <g fontFamily='Liberation Sans, sans-serif' fontSize='12' fill='#4c3cc0' textAnchor='middle'>
      <text x='584' y='214'>Z</text>
      <text x='778' y='254'>Y</text>
      <text x='648' y='374'>X</text>
    </g>

    <g filter='url(#shadow)' stroke='#777' strokeWidth='2' opacity='.6'>
      <path d='M686 534V564M670 549H702' />
      <circle cx='686' cy='549' r='12' />
    </g>
    <circle cx='683' cy='546' r='12' stroke='#111' strokeDasharray='11 7.85' strokeDashoffset='-3.9' />
    <path
      d='M681.5 530.5H684.5V544.5H697.5V547.5H684.5V560.5H681.5V547.5H667.5V544.5H681.5Z'
      fill='#fff' stroke='#111'
    />

    <path d='M267 614L257 605' stroke='#1734a8' strokeWidth='3' />
    <path d='M253 602L261 606L256 611Z' fill='#1734a8' />
    <path d='M285 621L293 616' stroke='#1d6a35' strokeWidth='3' />
    <path d='M298 612L288 614L292 620Z' fill='#1d6a35' />
    <path d='M266 640L268 634H271L270 640Z' fill='#c42a2a' stroke='#c42a2a' />
    <path d='M261 613L276 604L288 619L286 623L269 633L258 620Z' fill='#cfd6d8' fillOpacity='.85' stroke='#a2a8aa' strokeWidth='.8' />
    <path d='M261 613L273 628L288 619M273 628L269 633M276 604L275 612L286 623M275 612L258 620' stroke='#a2a8aa' strokeWidth='.8' />
    <path d='M262 612L269 620' stroke='#7b93b8' strokeWidth='2' />
    <g fontFamily='Liberation Sans, sans-serif' fontSize='12' textAnchor='middle'>
      <text x='250' y='604' fill='#3f5fc4'>Z</text>
      <text x='301' y='615' fill='#5a9468'>Y</text>
    </g>
  </Scene>
);

const App = () => {
  return (
    <>
      <GlobalStyle />
      <Page>
        <Ribbon>
          <RibbonGroup title='直接草图' width={116}>
            <Large icon='sketch' label='草图' width={58} />
            <Large gallery='curves' label='草图曲线' width={50} caret />
          </RibbonGroup>
          <RibbonGroup title='特征' width={201} pad={8}>
            <Small items={['plane', 'extrude', 'hole']} width={22} />
            <SmallCarets width={14} />
            <Small items={['pad', 'unite', 'shell']} width={24} />
            <SmallCarets width={12} />
            <Large icon='blend' label='边倒圆' width={46} />
            <Small items={['trim', 'offset', 'draft']} width={24} />
            <Large gallery='more' label='更多' width={50} caret />
          </RibbonGroup>
          <RibbonGroup title='同步建模' width={127} pad={4}>
            <Large icon='moveFace' label='移动面' width={50} />
            <Small items={['copyFace', 'resizeFace', 'deleteFace']} width={20} />
            <Large gallery='replace' label='更多' width={52} caret />
          </RibbonGroup>
          <RibbonGroup title='曲面' width={163} pad={4}>
            <Large icon='throughMesh' label='通过曲线网格' width={84} />
            <Small items={['mesh', 'sweep', 'nSided']} width={24} />
            <Large gallery='green' label='更多' width={50} caret />
          </RibbonGroup>
          <RibbonGroup title='编辑特征' width={271} pad={4}>
            <Large icon='rollbackEdit' label='可回滚编辑' width={74} />
            <Large icon='editParams' label='编辑特征参数' width={74} />
            <Large icon='featureDims' label='特征尺寸' width={64} />
            <Small items={['rollback', 'replaceFeature', 'reorder']} width={22} />
            <Small items={['dims', 'suppress', 'unsuppress']} width={24} />
          </RibbonGroup>
          <RibbonGroup width={43}>
            <Large icon='assembly' label='装配' width={42} caret />
          </RibbonGroup>
          <RibbonEnd>
            <GroupMore type='button' aria-label='功能区选项'>
              <Caret />
            </GroupMore>
          </RibbonEnd>
        </Ribbon>

        <Toolbar>
          <Section $left={10} $right={5}>
            <MenuButton type='button'>
              <Icon name='menu' />
              <span>
                菜单(<u>M</u>)
              </span>
              <Caret />
            </MenuButton>
          </Section>
          <Section $left={12} $right={6}>
            <Dropdown label='类型过滤器' width={146} after={10} options={['没有选择过滤器']} />
            <Dropdown label='选择范围' width={154} after={7} options={['整个装配']} />
            <ToolCell type='button' aria-label='部件' $width={24}><Icon name='grayPart' /></ToolCell>
            <ToolCell type='button' aria-label='过滤' $width={24}><Icon name='grayFilter' /></ToolCell>
            <ToolCell type='button' aria-label='捕捉' $width={34}><Icon name='snapBox' /><Caret /></ToolCell>
            <ToolCell type='button' aria-label='旋转点' $width={24}><Icon name='grayRotate' /></ToolCell>
            <ToolGrid $columns='26px 12px'>
              <GridButton type='button' aria-label='线'><Icon name='grayLine' /></GridButton>
              <span />
              <GridButton type='button' aria-label='矩形选择'><Icon name='lasso' /></GridButton>
              <Caret />
            </ToolGrid>
            <ToolGrid $columns='repeat(7, 25px)'>
              {snapTools.map(([name, on]) => (
                <GridButton key={name} type='button' aria-label={name} aria-pressed={!!on} $on={on}>
                  <Icon name={name} />
                </GridButton>
              ))}
            </ToolGrid>
          </Section>
          <Section $left={11} $right={6}>
            <Dropdown label='图层' width={51} after={6} options={['1']} />
            <ToolGrid $columns='25px 25px 25px 12px 25px 12px 25px'>
              {viewTools.map((name, index) =>
                name === 'caret' ? (
                  <Caret key={index} />
                ) : (
                  <GridButton key={name} type='button' aria-label={name}>
                    <Icon name={name} />
                  </GridButton>
                ),
              )}
            </ToolGrid>
          </Section>
          <Section>
            <ToolCell type='button' aria-label='测量' $width={38}><Icon name='measure' /></ToolCell>
          </Section>
          <ToolbarEnd>
            <GroupMore type='button' aria-label='工具条选项'>
              <Caret />
            </GroupMore>
          </ToolbarEnd>
        </Toolbar>

        <Workspace>
          <ResourceBar>
            {tabs.map((tab) => (
              <Tab key={tab.icon} type='button' aria-label={tab.label} $active={tab.active} $gap={tab.gap}>
                <Icon name={tab.icon} size={22} />
              </Tab>
            ))}
            <TabEdge viewBox='0 0 28 12'>
              <path d='M2 5C2 2 3 .5 6 .5H28V4C23 2 19 8 14 7C9 6 7 2 1 5Z' fill='#dcdcdc' stroke='#6f6f6f' />
            </TabEdge>
            <ScrollButton type='button' aria-label='滚动到顶部'>
              <Svg width='10' height='10' viewBox='0 0 10 10'>
                <path d='M1 2H9M5 3L9 8H1Z' fill='#a6a6a6' stroke='#a6a6a6' />
              </Svg>
            </ScrollButton>
            <ScrollButton type='button' aria-label='向上滚动'>
              <Svg width='10' height='10' viewBox='0 0 10 10'>
                <path d='M5 2L9 7H1Z' fill='#a6a6a6' />
              </Svg>
            </ScrollButton>
          </ResourceBar>

          <Navigator>
            <NavigatorTitle>
              <Icon name='pin' size={12} />
              <h1>部件导航器</h1>
            </NavigatorTitle>
            <TreeBox>
              <TreeTable>
                <thead>
                  <tr>
                    <th scope='col'>
                      <HeaderLabel>
                        名称
                        <Svg width='12' height='8' viewBox='0 0 12 8'>
                          <path d='M6 1L11 7H1Z' fill='#111' />
                        </Svg>
                      </HeaderLabel>
                    </th>
                  </tr>
                </thead>
                <tbody>
                  {rootItems.map((item, index) => (
                    <tr key={item.label}>
                      <td>
                        <RootRow item={item} first={index === 0} last={index === rootItems.length - 1} />
                      </td>
                    </tr>
                  ))}
                  {featureItems.map((item, index) => (
                    <tr key={item.id}>
                      <td>
                        <FeatureRow item={item} last={index === featureItems.length - 1} />
                      </td>
                    </tr>
                  ))}
                  {Array.from({ length: 15 }, (_, index) => (
                    <tr key={index}>
                      <td />
                    </tr>
                  ))}
                </tbody>
              </TreeTable>
            </TreeBox>
          </Navigator>

          <Viewport>
            <Model />
          </Viewport>
        </Workspace>
      </Page>
    </>
  );
};

export default App;
